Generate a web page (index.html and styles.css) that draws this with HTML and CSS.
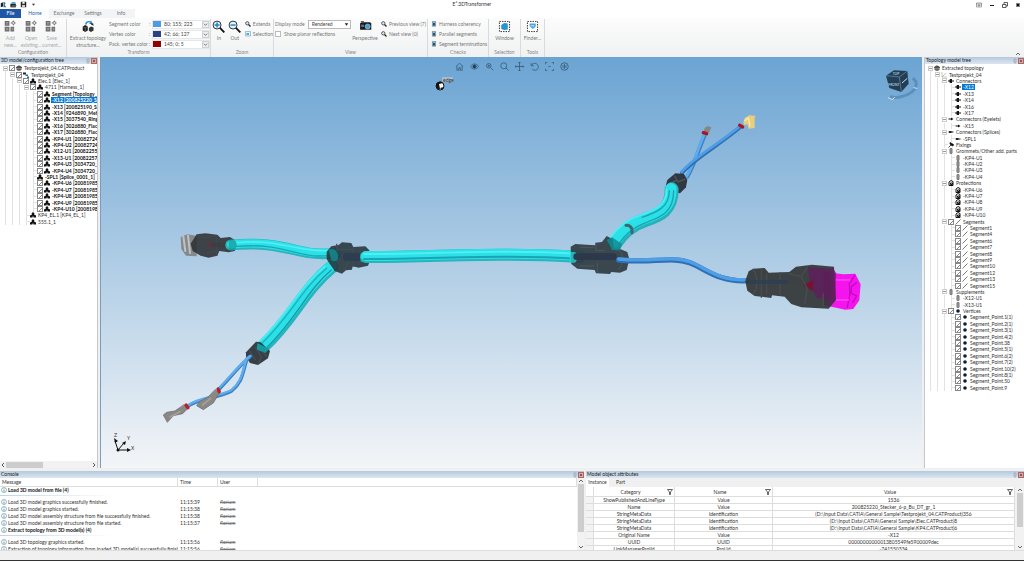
FILE: index.html
```html
<!DOCTYPE html>
<html lang="en">

<head>
    <meta charset="UTF-8">
    <meta name="viewport" content="width=device-width, initial-scale=1.0">
    <title>E³.3DTransformer</title>
    <link rel="stylesheet" href="styles.css">
</head>

<body>
    <!-- shared icons -->
    <svg class="sprite" width="0" height="0">
        <symbol id="i-root" viewBox="0 0 12 12"><path d="M2 3h8v7H2zM6 0v12M0 5h12M2 8h8" fill="none" stroke="#333" stroke-width="1.5"/></symbol>
        <symbol id="i-prod" viewBox="0 0 12 12"><path d="M0 1h6v4H0z" fill="#222"/><path d="M5 5h5v3H5zM8 9h4v3H8z" fill="#1d6fa8"/></symbol>
        <symbol id="i-part" viewBox="0 0 12 12"><path d="M6 0l3 3-1 2 4 2v4H7V9H5v2H0V7l4-2-1-2z" fill="#111"/></symbol>
        <symbol id="i-axes" viewBox="0 0 12 12"><path d="M2 0v10h10M2 10L10 2" fill="none" stroke="#888"/></symbol>
        <symbol id="i-plug" viewBox="0 0 12 12"><path d="M0 5h3V3l2-1h3v2h4v1H8v2h4v1H8v2H5L3 9V7H0z" fill="#111"/></symbol>
        <symbol id="i-eye" viewBox="0 0 12 12"><path d="M1 5h5V3l5 3-5 3V7H1z" fill="#111"/></symbol>
        <symbol id="i-splice" viewBox="0 0 12 12"><path d="M1 5h10v2H1zM2 4h5v4H2z" fill="#222"/></symbol>
        <symbol id="i-fix" viewBox="0 0 12 12"><path d="M1 11l5-5M4 1l7 4-1 3-3-1-3-3z" fill="#111" stroke="#111" stroke-width="1.5"/></symbol>
        <symbol id="i-grommet" viewBox="0 0 12 12"><path d="M4 1h4v10H4zM3 4h6M3 8h6M6 1v10" fill="none" stroke="#333"/></symbol>
        <symbol id="i-prot" viewBox="0 0 12 12"><path d="M2 4l4-3 4 2v8H2zM5 6h4v3H5z" fill="none" stroke="#111" stroke-width="2"/></symbol>
        <symbol id="i-line" viewBox="0 0 12 12"><path d="M1 11L11 1" stroke="#333" stroke-width="1.3"/></symbol>
        <symbol id="i-dot" viewBox="0 0 12 12"><circle cx="6" cy="6" r="3.6" fill="#0b1c33"/></symbol>
        <symbol id="i-filter" viewBox="0 0 12 12"><path d="M1 1h10L7 6v5H5V6z" fill="none" stroke="#333" stroke-width="1.5"/></symbol>
        <symbol id="i-info" viewBox="0 0 12 12"><circle cx="6" cy="6" r="5" fill="#fff" stroke="#3f7390"/><path d="M6 3v1.4M6 5.4V9.5" stroke="#3f7390" stroke-width="1.5"/></symbol>
        <symbol id="i-pin" viewBox="0 0 12 12"><path d="M3 8h6M4 8V2h4v6M6 8v4" fill="none" stroke="#888"/></symbol>
        <symbol id="i-x" viewBox="0 0 12 12"><path d="M3 3l6 6M9 3l-6 6" stroke="#6d3030" stroke-width="2"/></symbol>
        <symbol id="i-down" viewBox="0 0 12 12"><path d="M2 4l4 4 4-4" fill="none" stroke="#555" stroke-width="1.8"/></symbol>
        <symbol id="i-up" viewBox="0 0 12 12"><path d="M2 8l4-4 4 4" fill="none" stroke="#555" stroke-width="1.8"/></symbol>
        <symbol id="i-left" viewBox="0 0 12 12"><path d="M8 2L4 6l4 4" fill="none" stroke="#444" stroke-width="1.8"/></symbol>
        <symbol id="i-right" viewBox="0 0 12 12"><path d="M4 2l4 4-4 4" fill="none" stroke="#444" stroke-width="1.8"/></symbol>
        <symbol id="i-config" viewBox="0 0 36 36">
            <path d="M2 3h13v13H2zM2 19h13v13H2zM18 19h10v13H18z" fill="#6b6b6b"/>
            <path d="M5 7h7M5 11h7M5 23h7M5 27h7M21 23h5M21 27h5" stroke="#c9c9c9" stroke-width="1.5"/>
            <path d="M26 1l3 4 4 3-4 3-3 5-3-5-5-3 5-3z" fill="#777"/><circle cx="26" cy="8" r="2.5" fill="#eee"/>
        </symbol>
        <symbol id="i-mag" viewBox="0 0 12 12"><circle cx="4.6" cy="4.6" r="3.3" fill="#dcecf5" stroke="#333" stroke-width="1.6"/><path d="M7 7l4 4" stroke="#222" stroke-width="2.4"/></symbol>
        <symbol id="i-check" viewBox="0 0 12 15"><path d="M2 1h8v5H2zM2 8h8v5H2z" fill="#8dbfe0" stroke="#1b3c55"/><path d="M4 5h4v6H4z" fill="#1b3c55"/></symbol>
    </svg>

    <header class="titlebar">
        <div class="quick">
            <svg viewBox="0 0 18 18"><path d="M2 6l6-3v11l-6 2z" fill="#222"/><path d="M9 2l6 3-3 4 4 7H9z" fill="#2a79a8"/></svg>
            <svg viewBox="0 0 18 18"><path d="M1 7h14v9H1z" fill="#222"/><path d="M4 3h10v4H4z" fill="#2a9bd0"/><path d="M5 10h12l-3 6H2z" fill="#555"/></svg>
            <svg viewBox="0 0 18 18"><path d="M2 2h14v14H2z" fill="#222"/><path d="M6 2h6v5H6z" fill="#fff"/><path d="M5 10h8v6H5z" fill="#ccc"/></svg>
            <svg viewBox="0 0 18 18"><path d="M5 7h8l-4 5z" fill="#333"/></svg>
        </div>
        <h1>E³.3DTransformer</h1>
        <div class="winbtns">
            <button aria-label="Ribbon options"><svg viewBox="0 0 12 12"><path d="M1 2h10v8H1zM1 4h10M6 4v6M3 7h6" fill="none" stroke="#555"/></svg></button>
            <button aria-label="Minimize"><svg viewBox="0 0 12 12"><path d="M2 7h8" stroke="#222" stroke-width="2"/></svg></button>
            <button aria-label="Restore"><svg viewBox="0 0 12 12"><path d="M1 5h7v6H1zM4 5V1h7v7H8" fill="none" stroke="#333" stroke-width="1.6"/></svg></button>
            <button aria-label="Close"><svg viewBox="0 0 12 12"><path d="M3 3l6 6M9 3l-6 6" stroke="#111" stroke-width="3"/></svg></button>
        </div>
    </header>

    <nav class="tabs">
        <button class="tab file">File</button>
        <button class="tab active">Home</button>
        <button class="tab wide">Exchange</button>
        <button class="tab">Settings</button>
        <button class="tab">Info</button>
    </nav>

    <section class="ribbon">
        <div class="group g-config">
            <div class="body">
                <button class="big dim"><svg><use href="#i-config"/></svg>Add<br>new...</button>
                <button class="big dim"><svg><use href="#i-config"/></svg>Open<br>existing...</button>
                <button class="big dim"><svg><use href="#i-config"/></svg>Save<br>current...</button>
            </div>
            <div class="caption">Configuration</div>
        </div>
        <div class="group g-transform">
            <div class="body">
                <button class="big extract">
                    <svg viewBox="0 0 36 36"><path d="M2 18l7-4 7 4v11l-7 4-7-4z" fill="#1c1c1c"/><path d="M2 18l7 4 7-4M9 22v10" stroke="#ccc" fill="none"/><path d="M19 22l6-4 7 3v8l-7 4-6-3z" fill="#333"/><path d="M8 12c2-8 9-11 15-8l2-3 4 9-9 1 2-4c-5-2-8 1-10 6z" fill="#1e8fd0"/><path d="M23 8l8 2 1 6-6-3z" fill="#222"/></svg>
                    Extract topology<br>structure...
                </button>
                <div class="colors">
                    <label for="c1">Segment color</label><span>:</span>
                    <div class="combo"><i class="sw seg"></i><select id="c1"><option>80; 155; 223</option></select><svg><use href="#i-down"/></svg></div>
                    <label for="c2">Vertex color</label><span>:</span>
                    <div class="combo"><i class="sw ver"></i><select id="c2"><option>42; 66; 127</option></select><svg><use href="#i-down"/></svg></div>
                    <label for="c3">Pack. vertex color</label><span>:</span>
                    <div class="combo"><i class="sw pack"></i><select id="c3"><option>145; 0; 5</option></select><svg><use href="#i-down"/></svg></div>
                </div>
            </div>
            <div class="caption">Transform</div>
        </div>
        <div class="group g-zoom">
            <div class="body">
                <button class="big"><svg viewBox="0 0 36 36"><circle cx="14" cy="14" r="11" fill="#e4f3fb" stroke="#222" stroke-width="2.5"/><path d="M14 7v14M7 14h14" stroke="#1787c9" stroke-width="4"/><path d="M22 22l12 12" stroke="#111" stroke-width="5"/></svg>In</button>
                <button class="big"><svg viewBox="0 0 36 36"><circle cx="14" cy="14" r="11" fill="#e4f3fb" stroke="#222" stroke-width="2.5"/><path d="M7 14h14" stroke="#1787c9" stroke-width="4"/><path d="M22 22l12 12" stroke="#111" stroke-width="5"/></svg>Out</button>
                <div class="small">
                    <button><svg><use href="#i-mag"/></svg>Extends</button>
                    <button><svg viewBox="0 0 12 12"><path d="M1 1h10v9H1z" fill="#e7f3fa" stroke="#4a90b8"/><path d="M3 4h5v4H3z" fill="#5aa6d6"/></svg>Selection</button>
                </div>
            </div>
            <div class="caption">Zoom</div>
        </div>
        <div class="group g-view">
            <div class="body">
                <div class="display">
                    <div class="line"><label for="mode">Display mode</label>
                        <div class="combo mode"><select id="mode"><option>Rendered</option></select><svg viewBox="0 0 12 12"><path d="M3 4h6L6 8z" fill="#222"/></svg></div>
                    </div>
                    <label class="line"><input type="checkbox" class="chk">Show planar reflections</label>
                </div>
                <button class="big persp">
                    <svg viewBox="0 0 36 36"><path d="M3 9l8-3h20l3 4v17H3z" fill="#1a1a1a"/><path d="M5 3h9v5H5z" fill="#555"/><circle cx="24" cy="18" r="7" fill="#3aa5e0" stroke="#ccc" stroke-width="1.5"/><path d="M6 13h8v6H6z" fill="#4b7f9c"/></svg>
                    Perspective
                </button>
                <div class="small">
                    <button><svg><use href="#i-mag"/></svg>Previous view (7)</button>
                    <button><svg><use href="#i-mag"/></svg>Next view (0)</button>
                </div>
            </div>
            <div class="caption">View</div>
        </div>
        <div class="group g-checks">
            <div class="body">
                <div class="small">
                    <button><svg><use href="#i-check"/></svg>Harness coherency</button>
                    <button><svg><use href="#i-check"/></svg>Parallel segments</button>
                    <button><svg><use href="#i-check"/></svg>Segment terminations</button>
                </div>
            </div>
            <div class="caption">Checks</div>
        </div>
        <div class="group g-selection">
            <div class="body">
                <button class="big"><svg viewBox="0 0 36 36"><path d="M4 4h28v28H4z" fill="#fff" stroke="#222" stroke-width="2.5" stroke-dasharray="4 3"/><path d="M9 14l8-6 10 2v16l-10 2-8-3z" fill="#2593d6"/></svg>Window</button>
            </div>
            <div class="caption">Selection</div>
        </div>
        <div class="group g-tools">
            <div class="body">
                <button class="big"><svg viewBox="0 0 36 36"><path d="M4 4h28v28H4z" fill="#fff" stroke="#222" stroke-width="2.5" stroke-dasharray="4 3"/><path d="M10 10h17v8l-8 7-9-8z" fill="#4ba5dc"/><path d="M13 16h10" stroke="#fff" stroke-width="2"/></svg>Finder...</button>
            </div>
            <div class="caption">Tools</div>
        </div>
        <button class="collapse" aria-label="Collapse ribbon"><svg><use href="#i-up"/></svg></button>
    </section>

    <main class="workspace">
        <aside class="panel side">
            <h2><span>3D model/configuration tree</span><svg><use href="#i-pin"/></svg><svg class="close"><use href="#i-x"/></svg></h2>
            <ul class="tree" id="configTree"></ul>
            <div class="hscroll"><svg><use href="#i-left"/></svg><i></i><svg><use href="#i-right"/></svg></div>
        </aside>

        <section class="viewport">
            <svg class="scene" viewBox="101 57 821 411" preserveAspectRatio="xMidYMid slice">
                <!-- left and lower branches -->
                <g transform="translate(160 215) scale(.3333)" fill="none" stroke-linecap="round">
                    <path d="M62 66l20-8 28 4v62l-32-2-14-20z" fill="#85898c"/>
                    <path d="M70 64l6 44M84 62l6 52" stroke="#bfc2c4" stroke-width="6"/>
                    <path d="M92 86l18-28 26-3 36 4 10 10 28-3 16 10 6 14-8 18-18 4-28-4-6 14-26 6-24-6-24-14z" fill="#2d3032" opacity=".88"/>
                    <path d="M112 62l24 6 34-6M170 70v52M138 116l34-8" stroke="#45494c" stroke-width="3"/>
                    <path d="M148 88l8 4" stroke="#8a2030" stroke-width="7"/>
                    <path d="M160 90h40" stroke="#3a3f46" stroke-width="14"/>
                    <path d="M212 90C300 82 350 92 410 106S480 116 528 116" stroke="#27b5bd" stroke-width="32"/>
                    <path d="M214 88C300 80 350 90 410 104S480 113 528 113" stroke="#2be0e6" stroke-width="25"/>
                    <path d="M230 94C310 88 350 98 410 113S480 122 520 122" stroke="#1ba6b8" stroke-width="4"/>
                    <path d="M230 83C310 76 350 86 410 98S480 107 520 107" stroke="#4deff2" stroke-width="5"/>
                    <path d="M206 76c12-8 24 0 24 14s-12 22-24 14z" fill="#0e8c90" opacity=".6"/>
                    <path d="M516 155C430 225 400 310 312 392" stroke="#27b5bd" stroke-width="40"/>
                    <path d="M514 152C428 222 396 307 309 389" stroke="#2be0e6" stroke-width="32"/>
                    <path d="M514 165C440 227 410 312 322 396" stroke="#1a98a8" stroke-width="4"/>
                    <path d="M500 160C425 222 394 300 306 385" stroke="#1ab1c0" stroke-width="4"/>
                    <path d="M495 154C415 218 385 300 298 380" stroke="#4deff2" stroke-width="5"/>
                    <path d="M500 110l14-16 22-4 10-8 28 2 6 12 36-2 12 12 4 26-8 20-28 6-18-4-2 10-18 2-12 10-22-8-18-26-6-10z" fill="#26343b" opacity=".88"/>
                    <path d="M506 104c14-6 26 2 28 18s-8 20-20 14" fill="#138b92" opacity=".8"/>
                    <path d="M530 88v16h44M544 120l22 22-14 22M580 98v56M600 104v44" stroke="#3f4c55" stroke-width="4"/>
                    <path d="M560 126h60" stroke="#2d3e50" stroke-width="24"/>
                    <path d="M602 114h40v26h-40z" fill="#21c6ce" opacity=".75"/>
                    <path d="M258 412l30-32 14 2 28 26-6 22-30 20-24-6-12-18z" fill="#272d31" opacity=".9"/>
                    <path d="M292 384l36 18-12 12-26-10z" fill="#139ba1"/>
                    <path d="M270 410l16 24M286 396l18 30-8 18M308 412l12 12" stroke="#454e56" stroke-width="4"/>
                    <path d="M272 424C235 455 210 490 178 522M262 430C248 470 250 500 215 528C175 550 120 548 86 572" stroke="#3a80c4" stroke-width="10"/>
                    <path d="M270 423C233 454 208 489 176 520M260 430C246 470 248 498 213 526C173 547 120 545 86 570" stroke="#5fadee" stroke-width="7"/>
                    <path d="M166 524l12 10-18 30-30 20-20-12 8-12 26-14z" fill="#8a8784" stroke="#686765" stroke-width="2"/>
                    <path d="M72 570l12 10-16 16-28 6-18 20-12-22 10-8 24-4z" fill="#8a8784" stroke="#686765" stroke-width="2"/>
                    <path d="M174 522l4 8M78 570l6 8" stroke="#b5202a" stroke-width="10"/>
                    <path d="M128 570l24-20M30 606l30-16" stroke="#a4a19d" stroke-width="5"/>
                </g>
                <!-- trunk -->
                <g fill="none" stroke-linecap="round">
                    <path d="M366 257C430 257 500 252 580 257" stroke="#27b5bd" stroke-width="12"/>
                    <path d="M366 256C430 256 500 251 580 256" stroke="#2be0e6" stroke-width="10"/>
                    <path d="M364 259C430 259 500 254 580 259" stroke="#1aa3b4" stroke-width="2"/>
                    <path d="M364 254C430 254 500 249 580 254" stroke="#4deff2" stroke-width="2"/>
                </g>
                <!-- right branches -->
                <g transform="translate(560 100) scale(.3333)" fill="none" stroke-linecap="round">
                    <path d="M382 230C410 180 410 160 434 106" stroke="#3a80c4" stroke-width="12"/>
                    <path d="M380 230C408 180 408 160 432 106" stroke="#5fadee" stroke-width="8"/>
                    <path d="M366 218C410 170 470 140 540 82" stroke="#2f6fb3" stroke-width="12"/>
                    <path d="M365 215C408 168 468 138 538 80" stroke="#4f9fe6" stroke-width="8"/>
                    <path d="M430 98l4-14 8-6 12 4-6 14-8 8z" fill="#8b8580"/>
                    <path d="M430 98l10 3M539 76l9 5" stroke="#a81824" stroke-width="10"/>
                    <path d="M550 68l4-14 14-8 20 2-4 4v32l-18 2-4-14-8 4z" fill="#e8cf7c"/>
                    <path d="M566 56l4 22M554 62l10-8" stroke="#f8ebb0" stroke-width="4"/>
                    <path d="M322 240l24-20 26 2 10 18-4 22-18 18-28-6-14-20z" fill="#272d33" opacity=".92"/>
                    <path d="M344 228l10 18 20-8M330 250l18-8" stroke="#50565d" stroke-width="4"/>
                    <path d="M335 268C335 330 300 345 255 360S185 400 166 430" stroke="#27b0b8" stroke-width="42"/>
                    <path d="M333 266C333 326 298 341 253 356S183 396 164 424" stroke="#2be0e6" stroke-width="34"/>
                    <path d="M341 272C341 336 304 351 260 367S195 405 176 432M328 272C328 322 290 337 246 352" stroke="#1aa3b4" stroke-width="4"/>
                    <path d="M320 268C320 316 286 331 242 345S170 386 150 415" stroke="#4deff2" stroke-width="5"/>
                    <path d="M198 376c14 0 20 8 18 22" stroke="#3f6670" stroke-width="9"/>
                    <path d="M32 440l14-8 34 2 26 2v-8l20-2 14-18 18 10 4 28 20 2 20 8 6 22-8 32-20 8-26-2-4 6-42-2-4-10-52-4-18-14z" fill="#2a3439" opacity=".88"/>
                    <path d="M140 420l16-8 30 20-6 20-24-2z" fill="#118c93" opacity=".85"/>
                    <path d="M30 456h14c10 2 10 30 0 32H30z" fill="#2ad5dc" opacity=".75"/>
                    <path d="M50 470h110" stroke="#2b394a" stroke-width="20"/>
                    <path d="M108 432v20h26M112 490v26M176 450c16 12 16 44 0 58M60 442h40M62 498h40" stroke="#48535b" stroke-width="4"/>
                    <path d="M176 480C260 488 290 478 345 480C420 480 450 548 562 542" stroke="#2f6fb3" stroke-width="16"/>
                    <path d="M176 477C260 485 290 475 345 477C420 477 450 545 562 539" stroke="#4f9fe6" stroke-width="10"/>
                    <path d="M790 515l60 8 36-2 16 32-4 48-18 26-24 2-66-14z" fill="#f514ee"/>
                    <path d="M884 526l-16 26 2 30-8 40M890 548l-16 12v20l16 8-12 20" stroke="#c40ac2" stroke-width="4"/>
                    <path d="M826 540h44M826 600h40" stroke="#ff5cf8" stroke-width="3"/>
                    <path d="M558 536l8-22 14-8 34-2 12 14 62-2 20-16 48-6 66 6 6 100-22 26-82-4-30-10-20-22-38-4-2 8-50-6-22-16-6-28z" fill="#323536" opacity=".92"/>
                    <path d="M816 500l12 18-2 76-16 26z" fill="#6a1a66" opacity=".8"/>
                    <path d="M744 502l70 4-4 92-40-4-20-40z" fill="#6c1064" opacity=".6"/>
                    <path d="M730 555l30-14-2 32z" fill="#7c1030"/>
                    <path d="M580 508c14 20 14 56 0 74M604 508v84M620 520v62M660 518v66M684 520l40 10 18 36-8 44M742 502l-16 24M790 580v38" stroke="#484c4e" stroke-width="4"/>
                    <path d="M570 546h110" stroke="#2c3e55" stroke-width="12" opacity=".8"/>
                </g>
                <!-- navigation cube -->
                <g transform="translate(870 55) scale(.3333)">
                    <path d="M60 124c18 8 48 0 64-12s22-30 4-42" fill="none" stroke="#4a7fae" stroke-width="9" opacity=".6"/>
                    <path d="M48 62l24-16 40 2 4 38-22 25-36-12z" fill="#233f56"/>
                    <path d="M48 62l40 4 24-18M88 66l6 44" fill="none" stroke="#6f93ad" stroke-width="2"/>
                    <text x="68" y="61" class="cube">TOP</text><text x="55" y="94" class="cube">FRONT</text>
                    <path d="M96 84l16-14M54 128l14 6 6-8M130 98l12 2" stroke="#d4e1eb" stroke-width="3" fill="none"/>
                </g>
                <!-- pointer with tag -->
                <rect x="442" y="77" width="11" height="5" rx="1" fill="#a9bccd"/>
                <text x="443" y="82" class="tag">edge</text>
                <circle cx="440" cy="86" r="4" fill="#fff" stroke="#111"/><path d="M436 86a4 4 0 0 1 7-3l-4 1 1 5-2 1z" fill="#111"/><path d="M440 88l4-1-2 3z" fill="#111"/>
                <!-- axis triad -->
                <g stroke="#111" stroke-width="1" fill="#111">
                    <path d="M118 450l-3-9M118 450l6-7M118 450h9"/>
                    <path d="M114 438l4 3-3 2zM126 441l-1 4-3-2zM131 450l-4-2v4z" stroke="none"/>
                    <circle cx="118" cy="450" r="1.5" stroke="none"/>
                </g>
                <text x="114" y="437" class="axis">Z</text><text x="127" y="440" class="axis">Y</text><text x="131" y="450" class="axis">X</text>
            </svg>
            <div class="viewtools">
                <button aria-label="Home view"><svg viewBox="0 0 24 24"><path d="M3 12l9-9 9 9M5 10v12h5v-7h4v7h5V10"/></svg></button>
                <button aria-label="Look at"><svg viewBox="0 0 24 24"><path d="M1 12c6-9 16-9 22 0-6 9-16 9-22 0z"/><circle cx="12" cy="12" r="4.5" fill="#1c3c58"/></svg></button>
                <button aria-label="Zoom area"><svg viewBox="0 0 24 24"><circle cx="10" cy="10" r="6"/><path d="M15 15l7 7M7 10h6M10 7v6"/></svg></button>
                <button aria-label="Zoom"><svg viewBox="0 0 24 24"><circle cx="10" cy="10" r="8"/><path d="M16 16l7 7"/></svg></button>
                <button aria-label="Pan"><svg viewBox="0 0 24 24"><path d="M12 0v24M0 12h24M9 3l3-3 3 3M9 21l3 3 3-3M3 9l-3 3 3 3M21 9l3 3-3 3"/></svg></button>
                <button aria-label="Rotate"><svg viewBox="0 0 24 24"><path d="M3 3v7h7M4 9c4-8 17-7 18 3s-10 13-16 7"/></svg></button>
                <button aria-label="Fit all"><svg viewBox="0 0 24 24"><path d="M1 6V1h5M18 1h5v5M23 18v5h-5M6 23H1v-5M9 12h6"/></svg></button>
                <button aria-label="Render style"><svg viewBox="0 0 24 24"><circle cx="12" cy="12" r="10"/><path d="M12 5v14M8 8v8M16 8v8"/></svg></button>
            </div>
        </section>

        <aside class="panel side right">
            <h2><span>Topology model tree</span><svg><use href="#i-pin"/></svg><svg class="close"><use href="#i-x"/></svg></h2>
            <ul class="tree" id="topologyTree"></ul>
        </aside>
    </main>

    <section class="bottom">
        <div class="panel console">
            <h2><span>Console</span><svg><use href="#i-pin"/></svg><svg class="close"><use href="#i-x"/></svg></h2>
            <div class="scrollarea">
                <table class="log">
                    <colgroup><col class="c-msg"><col class="c-time"><col class="c-user"><col></colgroup>
                    <thead><tr><th>Message</th><th>Time</th><th>User</th><th></th></tr></thead>
                    <tbody>
                        <tr class="loggroup"><td colspan="4"><svg><use href="#i-info"/></svg>Load 3D model from file (4)</td></tr>
                        <tr><td><svg><use href="#i-info"/></svg>Load 3D model graphics successfully finished.</td><td>11:15:39</td><td class="usr">floriam</td><td></td></tr>
                        <tr><td><svg><use href="#i-info"/></svg>Load 3D model graphics started.</td><td>11:15:38</td><td class="usr">floriam</td><td></td></tr>
                        <tr><td><svg><use href="#i-info"/></svg>Load 3D model assembly structure from file successfully finished.</td><td>11:15:38</td><td class="usr">floriam</td><td></td></tr>
                        <tr><td><svg><use href="#i-info"/></svg>Load 3D model assembly structure from file started.</td><td>11:15:37</td><td class="usr">floriam</td><td></td></tr>
                        <tr class="loggroup"><td colspan="4"><svg><use href="#i-info"/></svg>Extract topology from 3D model(s) (4)</td></tr>
                        <tr><td><svg><use href="#i-info"/></svg>Load 3D topology graphics started.</td><td>11:15:56</td><td class="usr">floriam</td><td></td></tr>
                        <tr><td><svg><use href="#i-info"/></svg>Extraction of topology information from loaded 3D model(s) successfully finished.</td><td>11:15:56</td><td class="usr">floriam</td><td></td></tr>
                    </tbody>
                </table>
                <div class="vscroll"><svg><use href="#i-up"/></svg><i></i><svg><use href="#i-down"/></svg></div>
            </div>
        </div>

        <div class="panel attrs">
            <h2><span>Model object attributes</span><svg><use href="#i-pin"/></svg><svg class="close"><use href="#i-x"/></svg></h2>
            <div class="subtabs"><button class="on">Instance</button><button>Part</button></div>
            <div class="scrollarea">
                <table class="grid">
                    <colgroup><col class="c-row"><col class="c-cat"><col class="c-name"><col></colgroup>
                    <thead><tr><th></th><th>Category<svg><use href="#i-filter"/></svg></th><th>Name<svg><use href="#i-filter"/></svg></th><th>Value<svg><use href="#i-filter"/></svg></th></tr></thead>
                    <tbody>
                        <tr><th></th><td>ShowPublishedAndLineType</td><td>Value</td><td>1536</td></tr>
                        <tr><th></th><td>Name</td><td>Value</td><td>200825220_Stecker_6-p_Bu_DT_gr_1</td></tr>
                        <tr><th></th><td>StringMetaData</td><td>Identification</td><td>(D:\Input Data\CATIA\General Sample\Testprojekt_04.CATProduct)356</td></tr>
                        <tr><th></th><td>StringMetaData</td><td>Identification</td><td>(D:\Input Data\CATIA\General Sample\Elec.CATProduct)8</td></tr>
                        <tr><th></th><td>StringMetaData</td><td>Identification</td><td>(D:\Input Data\CATIA\General Sample\KP4.CATProduct)6</td></tr>
                        <tr><th></th><td>Original Name</td><td>Value</td><td>-X12</td></tr>
                        <tr><th></th><td>UUID</td><td>UUID</td><td>00000000000013805549fe5900009dec</td></tr>
                        <tr><th></th><td>LinkManagerProjId</td><td>Proj.Id</td><td>-741550334</td></tr>
                    </tbody>
                </table>
                <div class="vscroll"><svg><use href="#i-up"/></svg><i></i><svg><use href="#i-down"/></svg></div>
            </div>
        </div>
    </section>
    <footer class="status"></footer>

    <script src="script.js"></script>
</body>

</html>
```
FILE: styles.css
```css
* {
    box-sizing: border-box;
}

body {
    margin: 0;
    height: 100vh;
    display: flex;
    flex-direction: column;
    overflow: hidden;
    background: #f0f0f0;
    color: #333;
    font-family: "Lato", sans-serif;
    font-size: 5px;
    line-height: 7px;
}

svg {
    display: block;
    flex: none;
    width: 6px;
    height: 6px;
}

.sprite {
    position: absolute;
    width: 0;
    height: 0;
}

button,
select {
    margin: 0;
    padding: 0;
    border: 0;
    background: none;
    color: inherit;
    font: inherit;
    line-height: inherit;
}

h1,
h2,
ul {
    margin: 0;
    padding: 0;
    font-size: 5px;
    font-weight: normal;
    list-style: none;
}

i {
    display: block;
}

/* title bar and tabs */
.titlebar {
    height: 9px;
    display: grid;
    grid-template-columns: 1fr auto 1fr;
    align-items: center;
    background: #fff;
}

.titlebar h1 {
    padding-right: 80px;
}

.quick,
.winbtns {
    display: flex;
    gap: 3px;
}

.quick svg {
    width: 7px;
    height: 7px;
}

.winbtns {
    justify-content: flex-end;
    gap: 7px;
    padding-right: 3px;
}

.tabs {
    height: 9px;
    display: flex;
    background: #fff;
}

.tab {
    width: 28px;
    background: #f3f4f6;
    color: #777;
}

.tab.wide {
    width: 30px;
}

.tab.file {
    width: 21px;
    background: #1f57a4;
    color: #fff;
}

.tab.active {
    background: #fcfcfd;
    color: #2a66ad;
}

/* ribbon */
.ribbon {
    height: 39px;
    display: flex;
    padding-top: 1px;
    background: linear-gradient(#fcfcfc, #f0f1f2);
    color: #777;
}

.group {
    display: flex;
    flex-direction: column;
    flex: none;
    border-right: 1px solid #d8dadd;
}

.g-config { width: 67px; }
.g-transform { width: 144px; }
.g-zoom { width: 63px; }
.g-view { width: 154px; }
.g-checks { width: 61px; }
.g-selection { width: 32px; }
.g-tools { width: 24px; }

.g-config .body {
    padding-right: 4px;
}

.body {
    height: 30px;
    display: flex;
}

.caption {
    text-align: center;
    color: #888;
}

.big {
    flex: 1;
    display: block;
    padding-top: 1px;
    align-self: flex-start;
    text-align: center;
}

.big svg {
    width: 13px;
    height: 13px;
    margin: 0 auto 2px;
}

.dim {
    color: #aaa;
}

.extract {
    flex: none;
    width: 42px;
}

.colors {
    flex: 1;
    display: grid;
    grid-template-columns: 1fr 3px 58px;
    grid-auto-rows: 10px;
    align-items: center;
    white-space: nowrap;
}

.combo {
    height: 9px;
    display: flex;
    align-items: center;
    border: 1px solid #e4e6e8;
    background: #fff;
    color: #444;
}

.combo select {
    flex: 1;
    min-width: 0;
    height: 7px;
    padding-left: 3px;
    appearance: none;
}

.combo svg {
    width: 7px;
    height: 7px;
    border: 1px solid #cfd2d5;
    background: #eee;
}

.mode svg {
    border: 0;
    background: none;
}

.sw {
    width: 8px;
    height: 6px;
}

.seg { background: #509bdf; }
.ver { background: #2a427f; }
.pack { background: #910005; }

.small {
    display: flex;
    flex-direction: column;
    padding-left: 2px;
    white-space: nowrap;
}

.g-checks .small {
    padding-left: 3px;
}

.small button {
    height: 10px;
    display: flex;
    align-items: center;
    gap: 2px;
}

.display {
    width: 77px;
    padding-left: 1px;
}

.line {
    height: 10px;
    display: flex;
    align-items: center;
    gap: 3px;
    white-space: nowrap;
}

.mode {
    flex: 1;
    border-color: #bbb;
}

.persp {
    flex: none;
    width: 28px;
}

.chk {
    flex: none;
    appearance: none;
    width: 6px;
    height: 6px;
    margin: 0;
    border: 1px solid #bbb;
    background: #fff;
}

.collapse {
    margin-left: auto;
    padding-right: 3px;
    align-self: flex-end;
}

/* panels */
.workspace {
    flex: 1;
    min-height: 0;
    display: flex;
    gap: 2px;
}

.panel {
    display: flex;
    flex-direction: column;
    background: #fff;
    overflow: hidden;
}

.panel h2 {
    flex: none;
    height: 7px;
    display: flex;
    align-items: center;
    padding-left: 1px;
    background: linear-gradient(#b4c9df, #dde6f0);
    color: #222;
}

.panel h2 span {
    flex: 1;
}

.close {
    border: 1px solid #a86a6a;
    background: #dba5a2;
}

.side {
    flex: none;
    width: 98px;
    border-right: 1px solid #c4c8cc;
}

.side.right {
    width: 100px;
    border: 0;
    border-left: 1px solid #c4c8cc;
}

/* rows share the list height evenly */
.tree {
    height: 160px;
    flex: none;
    display: grid;
    grid-auto-rows: 1fr;
    margin-top: 1px;
    padding-left: 2px;
}

#topologyTree {
    height: 326px;
}

.tree li,
.tree label {
    display: flex;
    align-items: center;
    min-height: 0;
    white-space: nowrap;
}

.tree li > i,
.tree li > b {
    flex: none;
    width: 7px;
    height: 100%;
    background: linear-gradient(#e2e2e2, #e2e2e2) 3px 0 / 1px 100% no-repeat;
}

.tree li > .leaf {
    background: linear-gradient(#e2e2e2, #e2e2e2) 3px 0 / 1px 100% no-repeat, linear-gradient(#e2e2e2, #e2e2e2) 3px 50% / 4px 1px no-repeat;
}

.tree li > .box {
    width: 5px;
    height: 5px;
    margin: 0 1px;
    border: 1px solid #ccc;
    background: linear-gradient(#999, #999) center / 3px 1px no-repeat;
}

.tree .chk {
    margin-right: 1px;
    border-color: #888;
}

.tree .chk:checked {
    background: linear-gradient(135deg, #fff 55%, #888 55%, #888 70%, #fff 70%);
}

.tree svg {
    margin-right: 1px;
}

.tree span {
    padding: 0 1px;
    line-height: 6px;
}

.tree .bold {
    font-weight: bold;
    color: #111;
}

.tree .sel {
    background: #0078d7;
    color: #fff;
}

.hscroll {
    height: 7px;
    margin-top: auto;
    display: flex;
    align-items: center;
    background: #f2f2f2;
}

.hscroll i {
    width: 37px;
    height: 6px;
    margin-right: auto;
    background: #cdcdcd;
}

/* 3D view */
.viewport {
    position: relative;
    flex: 1;
    min-width: 0;
    border-left: 1px solid #7d9cba;
    background: linear-gradient(#6ba4d3, #f3f5f7);
}

.scene {
    width: 100%;
    height: 100%;
}

.tag,
.axis {
    font-size: 5px;
    fill: #333;
}

.cube {
    font-size: 10px;
    fill: #d4e1eb;
}

.viewtools {
    position: absolute;
    top: 5px;
    left: 0;
    right: 0;
    display: flex;
    justify-content: center;
    gap: 6px;
}

.viewtools svg {
    width: 9px;
    height: 9px;
    fill: none;
    stroke: #33566f;
    stroke-width: 2;
}

/* bottom panels */
.bottom {
    height: 79px;
    margin-top: 3px;
    display: flex;
    gap: 2px;
}

.console {
    flex: 4;
}

.attrs {
    flex: 3;
}

.scrollarea {
    flex: 1;
    min-height: 0;
    display: flex;
    align-items: flex-start;
    overflow: hidden;
}

table {
    flex: 1;
    min-width: 0;
    width: 100%;
    table-layout: fixed;
    border-collapse: separate;
    border-spacing: 0;
}

th,
td {
    height: 7px;
    padding: 0;
    font-weight: normal;
    white-space: nowrap;
    overflow: hidden;
}

.c-msg { width: 178px; }
.c-time { width: 40px; }
.c-user { width: 40px; }
.c-row { width: 8px; }
.c-cat { width: 81px; }
.c-name { width: 98px; }

.log th {
    height: 9px;
    padding-left: 2px;
    border-right: 1px solid #ddd;
    border-bottom: 1px solid #ddd;
    text-align: left;
}

.log td {
    padding-left: 2px;
}

.log td:first-child {
    padding-left: 0;
}

.log td svg {
    float: left;
    margin: 0 1px;
}

.log .usr {
    color: #777;
    text-decoration: line-through;
}

.loggroup td {
    height: 12px;
    padding-bottom: 5px;
    color: #111;
    font-weight: bold;
    background: linear-gradient(90deg, #b9d5ea, #fff) 0 8px / 112px 1px no-repeat;
}

.subtabs {
    flex: none;
    height: 9px;
    display: flex;
    background: #f0f0f0;
}

.subtabs button {
    width: 23px;
}

.subtabs .on {
    background: #fff;
}

.grid th,
.grid td {
    border-right: 1px solid #ddd;
    border-bottom: 1px solid #ddd;
    text-align: center;
    line-height: 6px;
}

.grid thead th {
    height: 10px;
}

.grid tbody th {
    background: #f3f3f3;
}

.grid th svg {
    float: right;
    margin-right: 1px;
}

.vscroll {
    flex: none;
    align-self: stretch;
    width: 7px;
    display: flex;
    flex-direction: column;
    align-items: center;
    background: #f2f2f2;
}

.vscroll i {
    width: 6px;
    height: 48px;
    margin-bottom: auto;
    background: #cdcdcd;
}

.attrs .vscroll {
    width: 9px;
}

.attrs .vscroll i {
    height: 34px;
}

.status {
    flex: none;
    height: 11px;
    border-top: 1px solid #ddd;
    border-bottom: 1px solid #333;
}
```
FILE: script.js
```javascript
// [depth, icon, text, flags]  b = bold, c = checkbox, s = selected, e = expandable
const configRows = [
    [0, "root", "Testprojekt_04.CATProduct", "ec"],
    [1, "prod", "Testprojekt_04", "ec"],
    [2, "part", "Elec.1 [Elec_1]", "ec"],
    [3, "part", "4711 [Harness_1]", "ec"],
    [4, "part", "Segment [Topology_", "bc"],
    [4, "part", "-X12 [200825220_St", "bcs"],
    [4, "part", "-X13 [200825190_St", "bc"],
    [4, "part", "-X14 [9246890_Meh", "bc"],
    [4, "part", "-X15 [3037540_Ring", "bc"],
    [4, "part", "-X16 [3026880_Flac", "bc"],
    [4, "part", "-X17 [3026880_Flac", "bc"],
    [4, "part", "-KP4-U1 [20082724", "bc"],
    [4, "part", "-KP4-U2 [20082724", "bc"],
    [4, "part", "-X12-U1 [200822550", "bc"],
    [4, "part", "-X13-U1 [200822570", "bc"],
    [4, "part", "-KP4-U3 [3034720_", "bc"],
    [4, "part", "-KP4-U4 [3034720_", "bc"],
    [4, "part", "-SPL1 [Splice_0001_1]", "b"],
    [4, "part", "-KP4-U6 [20081985", "bc"],
    [4, "part", "-KP4-U7 [20081985", "bc"],
    [4, "part", "-KP4-U8 [20081985", "bc"],
    [4, "part", "-KP4-U9 [20081985", "bc"],
    [4, "part", "-KP4-U10 [2008198", "bc"],
    [3, "part", "KP4_EL.1 [KP4_EL_1]", ""],
    [3, "part", "555.1_1", ""]
];

const children = (depth, icon, names, flags = "") => names.map(name => [depth, icon, name, flags]);

const topologyRows = [
    [0, "root", "Extracted topology", "e"],
    [1, "axes", "Testprojekt_04", "e"],
    [2, "plug", "Connectors", "e"],
    [3, "plug", "-X12", "s"],
    ...children(3, "plug", ["-X13", "-X14", "-X16", "-X17"]),
    [2, "eye", "Connectors (Eyelets)", "e"],
    [3, "eye", "-X15", ""],
    [2, "splice", "Connectors (Splices)", "e"],
    [3, "splice", "-SPL1", ""],
    [2, "fix", "Fixings", ""],
    [2, "grommet", "Grommets/Other add. parts", "e"],
    ...children(3, "grommet", ["-KP4-U1", "-KP4-U2", "-KP4-U3", "-KP4-U4"]),
    [2, "prot", "Protections", "e"],
    ...children(3, "prot", ["-KP4-U6", "-KP4-U7", "-KP4-U8", "-KP4-U9", "-KP4-U10"]),
    [2, "line", "Segments", "ec"],
    ...children(3, "line", [1, 4, 6, 7, 8, 9, 10, 12, 13, 15].map(n => "Segment" + n), "c"),
    [2, "grommet", "Supplements", "e"],
    ...children(3, "grommet", ["-X12-U1", "-X13-U1"]),
    [2, "dot", "Vertices", "ec"],
    ...children(3, "dot", ["1(1)", "2(1)", "3(1)", "4(2)", "38", "5(1)", "6(2)", "7(2)", "10(2)", "8(1)", "50", "9"].map(n => "Segment_Point." + n), "c")
];

function renderTree(id, rows) {
    document.getElementById(id).innerHTML = rows.map(([depth, icon, text, flags]) => {
        const has = flag => flags.includes(flag);
        const cls = (has("b") ? "bold " : "") + (has("s") ? "sel" : "");
        return `<li>${"<i></i>".repeat(depth)}<b class="${has("e") ? "box" : "leaf"}"></b>
            <label>${has("c") ? '<input type="checkbox" class="chk" checked>' : ""}<svg><use href="#i-${icon}"/></svg><span class="${cls}">${text}</span></label></li>`;
    }).join("");
}

renderTree("configTree", configRows);
renderTree("topologyTree", topologyRows);
```
